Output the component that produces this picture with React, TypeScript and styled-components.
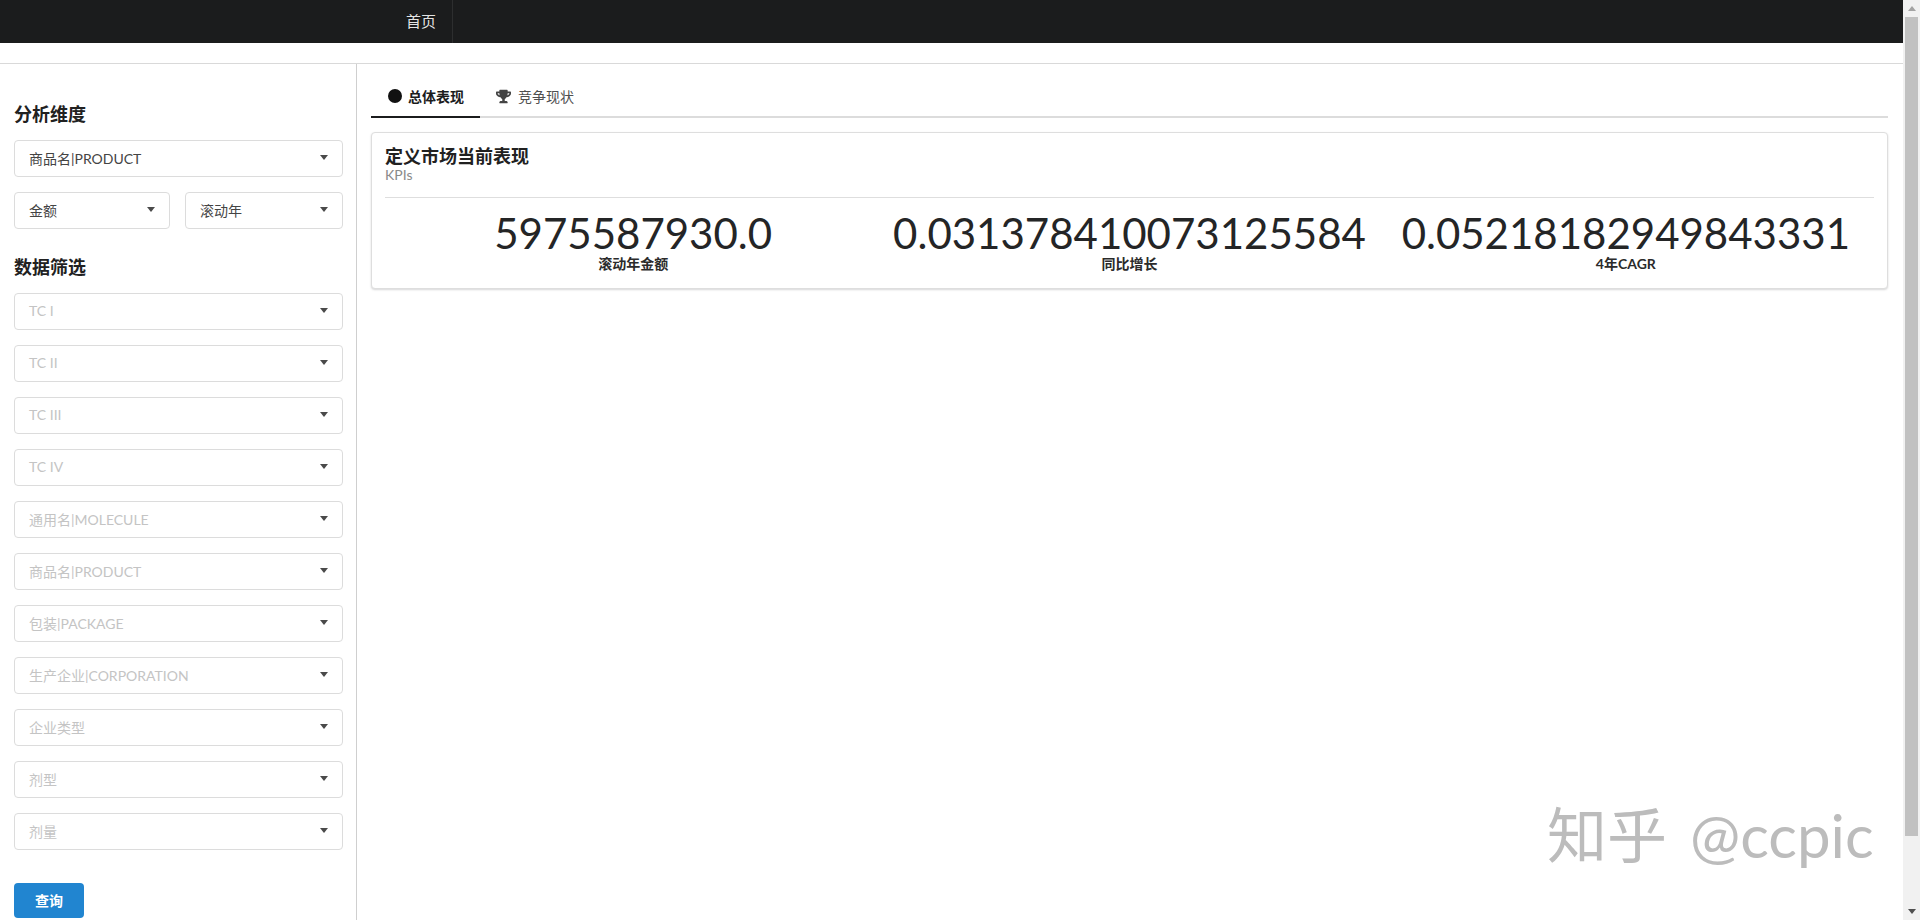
import React from "react";
import styled, { createGlobalStyle } from "styled-components";
import { FaTrophy } from "react-icons/fa";

const GlobalStyle = createGlobalStyle`
	html, body {
		margin: 0;
		padding: 0;
		height: 920px;
		overflow: hidden;
		background: #fff;
	}
	body {
		font-family: Lato, "Noto Sans CJK SC", "Liberation Sans", sans-serif;
		font-size: 14px;
		color: #212121;
	}
	* {
		box-sizing: border-box;
	}
`;

const Page = styled.div`
	position: relative;
	display: flex;
	width: 1920px;
	height: 920px;
	overflow: hidden;
`;

const Content = styled.div`
	flex: 1;
	min-width: 0;
	display: flex;
	flex-direction: column;
`;

const TopNav = styled.nav`
	flex: none;
	height: 43px;
	padding-left: 390px;
	display: flex;
	background: #1b1c1d;
`;

const NavItem = styled.a`
	display: flex;
	align-items: center;
	padding: 0 16px 2px;
	font-size: 15px;
	color: rgba(255, 255, 255, 0.9);
	border-right: 1px solid #2d2e2f;
`;

const Body = styled.div`
	flex: none;
	margin-top: 20px;
	height: 857px;
	display: flex;
	border-top: 1px solid #d9d9d9;
`;

const Sidebar = styled.aside`
	flex: none;
	width: 357px;
	padding: 39px 13px 0 14px;
	border-right: 1px solid #cfcfcf;
`;

const SideHeading = styled.h3<{ $top?: number }>`
	margin: ${(p) => p.$top ?? 0}px 0 15px;
	font-size: 18px;
	line-height: 22px;
	font-weight: 700;
	color: #212121;
`;

const FieldStack = styled.div`
	display: flex;
	flex-direction: column;
	gap: 15px;
`;

const FieldRow = styled.div`
	display: grid;
	grid-template-columns: 156px 158px;
	gap: 15px;
`;

const Select = styled.div`
	height: 37px;
	padding: 0 14px 2px 14px;
	display: flex;
	align-items: center;
	justify-content: space-between;
	background: #fff;
	border: 1px solid #dcdcdc;
	border-radius: 4px;
`;

const SelectText = styled.span<{ $empty?: boolean }>`
	font-size: 14px;
	color: ${(p) => (p.$empty ? "#c4c4c4" : "#444")};
`;

const Caret = styled.i`
	width: 0;
	height: 0;
	border-left: 4px solid transparent;
	border-right: 4px solid transparent;
	border-top: 5px solid #4a4a4a;
`;

const QueryButton = styled.button`
	display: block;
	margin-top: 33px;
	width: 70px;
	height: 35px;
	padding: 0 0 2px;
	border: 0;
	border-radius: 4px;
	background: #2185d0;
	color: #fff;
	font-family: inherit;
	font-size: 14px;
	font-weight: 700;
`;

const Main = styled.main`
	flex: 1;
	min-width: 0;
	padding: 12px 15px 0 14px;
`;

const TabBar = styled.div`
	display: flex;
	height: 42px;
	border-bottom: 2px solid #dcdcdc;
`;

const Tab = styled.div<{ $active?: boolean }>`
	height: 42px;
	padding: 0 16px;
	display: flex;
	align-items: center;
	gap: ${(p) => (p.$active ? 6 : 7)}px;
	font-size: 14px;
	font-weight: ${(p) => (p.$active ? 700 : 400)};
	color: ${(p) => (p.$active ? "#1b1c1d" : "#4f4f4f")};
	border-bottom: 2px solid ${(p) => (p.$active ? "#1b1c1d" : "transparent")};
`;

const Dot = styled.i`
	margin-left: 1px;
	width: 14px;
	height: 14px;
	border-radius: 50%;
	background: #111;
`;

const TrophyIcon = styled(FaTrophy)`
	width: 15px;
	height: 15px;
	color: #444;
`;

const Card = styled.section`
	margin-top: 14px;
	height: 157px;
	padding: 12px 13px 0 13px;
	background: #fff;
	border: 1px solid #dedede;
	border-radius: 4px;
	box-shadow: 0 1px 2px rgba(34, 36, 38, 0.18);
`;

const CardTitle = styled.h2`
	margin: 0;
	font-size: 18px;
	line-height: 22px;
	font-weight: 700;
	color: #212121;
`;

const CardSub = styled.div`
	font-size: 14px;
	line-height: 16px;
	color: #8a8a8a;
`;

const CardRule = styled.hr`
	margin: 14px 0 0;
	border: 0;
	border-top: 1px solid #dedede;
`;

const StatGrid = styled.div`
	display: grid;
	grid-template-columns: repeat(3, 1fr);
	margin-top: 14px;
`;

const Stat = styled.div`
	display: flex;
	flex-direction: column;
	align-items: center;
`;

const StatValue = styled.div`
	font-size: 42px;
	line-height: 42px;
	font-weight: 400;
	color: #242526;
	white-space: nowrap;
`;

const StatLabel = styled.div`
	margin-top: 1px;
	font-size: 14px;
	line-height: 18px;
	font-weight: 700;
	color: #2b2b2b;
`;

const ScrollTrack = styled.div`
	flex: none;
	width: 17px;
	display: flex;
	flex-direction: column;
	align-items: center;
	background: #f1f1f1;
`;

const ScrollArrow = styled.i<{ $down?: boolean }>`
	flex: none;
	margin: 6px 0;
	width: 0;
	height: 0;
	border-left: 4px solid transparent;
	border-right: 4px solid transparent;
	${(p) => (p.$down ? "border-top: 5px solid #505050;" : "border-bottom: 5px solid #a3a3a3;")}
`;

const ScrollThumb = styled.div`
	flex: none;
	width: 13px;
	height: 819px;
	background: #c1c1c1;
`;

const ScrollGap = styled.div`
	flex: 1;
`;

const Watermark = styled.div`
	position: absolute;
	left: 1547px;
	top: 798px;
	display: flex;
	align-items: baseline;
	gap: 23px;
	font-size: 60px;
	line-height: 74px;
	color: #bcbcbc;
	white-space: nowrap;
	font-weight: 400;
`;

const fields = [
	"TC I",
	"TC II",
	"TC III",
	"TC IV",
	"通用名|MOLECULE",
	"商品名|PRODUCT",
	"包装|PACKAGE",
	"生产企业|CORPORATION",
	"企业类型",
	"剂型",
	"剂量",
];

const stats = [
	{ value: "5975587930.0", label: "滚动年金额" },
	{ value: "0.031378410073125584", label: "同比增长" },
	{ value: "0.05218182949843331", label: "4年CAGR" },
];

const App = () => {
	return (
		<>
			<GlobalStyle />
			<Page>
				<Content>
					<TopNav>
						<NavItem>首页</NavItem>
					</TopNav>
					<Body>
						<Sidebar>
							<SideHeading>分析维度</SideHeading>
							<FieldStack>
								<Select>
									<SelectText>商品名|PRODUCT</SelectText>
									<Caret />
								</Select>
								<FieldRow>
									<Select>
										<SelectText>金额</SelectText>
										<Caret />
									</Select>
									<Select>
										<SelectText>滚动年</SelectText>
										<Caret />
									</Select>
								</FieldRow>
							</FieldStack>
							<SideHeading $top={27}>数据筛选</SideHeading>
							<FieldStack>
								{fields.map((f) => (
									<Select key={f}>
										<SelectText $empty>{f}</SelectText>
										<Caret />
									</Select>
								))}
							</FieldStack>
							<QueryButton>查询</QueryButton>
						</Sidebar>
						<Main>
							<TabBar>
								<Tab $active>
									<Dot />
									总体表现
								</Tab>
								<Tab>
									<TrophyIcon />
									竞争现状
								</Tab>
							</TabBar>
							<Card>
								<CardTitle>定义市场当前表现</CardTitle>
								<CardSub>KPIs</CardSub>
								<CardRule />
								<StatGrid>
									{stats.map((s) => (
										<Stat key={s.label}>
											<StatValue>{s.value}</StatValue>
											<StatLabel>{s.label}</StatLabel>
										</Stat>
									))}
								</StatGrid>
							</Card>
						</Main>
					</Body>
				</Content>
				<ScrollTrack>
					<ScrollArrow />
					<ScrollThumb />
					<ScrollGap />
					<ScrollArrow $down />
				</ScrollTrack>
				<Watermark>
					<span>知乎</span>
					<span>@ccpic</span>
				</Watermark>
			</Page>
		</>
	);
};

export default App;
